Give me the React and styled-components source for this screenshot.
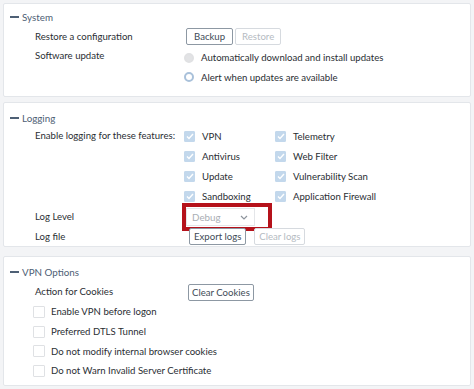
import styled, { createGlobalStyle } from "styled-components";

const GlobalStyle = createGlobalStyle`
  html, body {
    margin: 0;
    background: #f3f4f6;
    font-family: Lato, "Open Sans", sans-serif;
    font-size: 9.6px;
    color: #2a2e33;
  }
`;

const Page = styled.div`
  width: 468px;
  padding: 3px 0 0 3px;
  display: flex;
  flex-direction: column;
  gap: 5px;
`;

const Panel = styled.section`
  background: #ffffff;
  border: 1px solid #e3e6ea;
  border-radius: 2px;
  padding: ${(p) => p.$pad || "6px 0 6px 6px"};
  margin-top: ${(p) => p.$mt || 0}px;
  display: flex;
  flex-direction: column;
`;

const Header = styled.div`
  display: flex;
  align-items: center;
  gap: 3px;
  height: 16px;
  color: #4e6075;
  font-size: 9.8px;
  margin-bottom: 2px;
`;

const Dash = styled.span`
  width: 9px;
  height: 2px;
  background: #4e6075;
`;

const Row = styled.div`
  display: grid;
  grid-template-columns: 149px auto;
  align-items: ${(p) => p.$align || "center"};
  min-height: ${(p) => p.$h || 19}px;
  margin-left: 25px;
  margin-top: ${(p) => p.$mt || 0}px;
`;

const Label = styled.div`
  line-height: 14px;
  white-space: nowrap;
  padding-top: ${(p) => p.$top || 0}px;
`;

const Controls = styled.div`
  display: flex;
  align-items: center;
  gap: ${(p) => p.$gap || 2}px;
  padding-left: ${(p) => p.$left || 0}px;
`;

const Button = styled.button`
  font-family: inherit;
  font-size: 9.6px;
  height: 17px;
  padding: 0 ${(p) => p.$px || 6}px;
  background: #fff;
  border: 1px solid ${(p) => (p.disabled ? "#d6dadf" : "#8d98a3")};
  border-radius: 2px;
  color: ${(p) => (p.disabled ? "#b5bbc2" : "#3e4a56")};
  line-height: 15px;
`;

const RadioList = styled.div`
  display: flex;
  flex-direction: column;
  margin-top: 2px;
`;

const RadioItem = styled.div`
  display: flex;
  align-items: center;
  gap: 7px;
  height: 19.5px;
`;

const Radio = styled.span`
  width: 10px;
  height: 10px;
  border-radius: 50%;
  box-sizing: border-box;
  background: ${(p) => (p.$disabled ? "#e2e3e5" : "#fff")};
  border: 2px solid ${(p) => (p.$disabled ? "#e0e1e3" : "#a9c1da")};
`;

const CheckGrid = styled.div`
  display: grid;
  grid-template-columns: 91px auto;
  grid-auto-rows: 20px;
  align-items: center;
`;

const CheckItem = styled.div`
  display: flex;
  align-items: center;
  gap: 7px;
`;

const Box = styled.span`
  width: ${(p) => (p.$checked ? 11 : 12)}px;
  height: ${(p) => (p.$checked ? 11 : 12)}px;
  box-sizing: border-box;
  display: inline-flex;
  align-items: center;
  justify-content: center;
  background: ${(p) => (p.$checked ? "#c3d8ec" : "#fff")};
  border: 1px solid ${(p) => (p.$checked ? "#c3d8ec" : "#dfe1e4")};
  border-radius: 1px;
`;

const Highlight = styled.div`
  display: inline-flex;
  padding: 1px 13px 1px 0;
  outline: 4px solid #b5121b;
  margin-left: 2px;
`;

const Select = styled.div`
  width: 69px;
  height: 18px;
  box-sizing: border-box;
  border: 1px solid #e4e6e9;
  display: flex;
  align-items: center;
  justify-content: space-between;
  padding: 0 6px 0 5px;
  color: #a9aeb4;
  font-size: 9.8px;
`;

const CheckRow = styled.div`
  display: flex;
  align-items: center;
  gap: 6px;
  height: 19.7px;
  margin-left: 23px;
`;

function Check({ checked }) {
  return (
    <Box $checked={checked}>
      {checked && (
        <svg width="8" height="7" viewBox="0 0 8 7">
          <path d="M1 3.5 L3 5.5 L7 1" fill="none" stroke="#fff" strokeWidth="1.4" />
        </svg>
      )}
    </Box>
  );
}

const features = [
  ["VPN", "Telemetry"],
  ["Antivirus", "Web Filter"],
  ["Update", "Vulnerability Scan"],
  ["Sandboxing", "Application Firewall"],
];

const vpnOptions = [
  "Enable VPN before logon",
  "Preferred DTLS Tunnel",
  "Do not modify internal browser cookies",
  "Do not Warn Invalid Server Certificate",
];

export default function App() {
  return (
    <>
      <GlobalStyle />
      <Page>
        <Panel $pad="5px 0 9px 6px">
          <Header>
            <Dash /> System
          </Header>
          <Row>
            <Label>Restore a configuration</Label>
            <Controls $left={2}>
              <Button $px={7}>Backup</Button>
              <Button disabled>Restore</Button>
            </Controls>
          </Row>
          <Row $align="start">
            <Label $top={3}>Software update</Label>
            <RadioList>
              <RadioItem>
                <Radio $disabled />
                Automatically download and install updates
              </RadioItem>
              <RadioItem>
                <Radio />
                Alert when updates are available
              </RadioItem>
            </RadioList>
          </Row>
        </Panel>

        <Panel $pad="7px 0 1px 6px">
          <Header>
            <Dash /> Logging
          </Header>
          <Row $align="start" $mt={-2}>
            <Label $top={3}>Enable logging for these features:</Label>
            <CheckGrid>
              {features.map(([a, b]) => [
                <CheckItem key={a}>
                  <Check checked />
                  {a}
                </CheckItem>,
                <CheckItem key={b}>
                  <Check checked />
                  {b}
                </CheckItem>,
              ])}
            </CheckGrid>
          </Row>
          <Row $h={22}>
            <Label>Log Level</Label>
            <Controls>
              <Highlight>
                <Select>
                  Debug
                  <svg width="8" height="5" viewBox="0 0 8 5">
                    <path d="M1 1 L4 4 L7 1" fill="none" stroke="#8d949c" strokeWidth="1.2" />
                  </svg>
                </Select>
              </Highlight>
            </Controls>
          </Row>
          <Row $h={17}>
            <Label>Log file</Label>
            <Controls $gap={8} $left={5}>
              <Button $px={4}>Export logs</Button>
              <Button $px={4} disabled>Clear logs</Button>
            </Controls>
          </Row>
        </Panel>

        <Panel $pad="7px 0 4px 6px" $mt={4}>
          <Header>
            <Dash /> VPN Options
          </Header>
          <Row $h={20}>
            <Label>Action for Cookies</Label>
            <Controls $left={4}>
              <Button $px={3}>Clear Cookies</Button>
            </Controls>
          </Row>
          {vpnOptions.map((o) => (
            <CheckRow key={o}>
              <Check />
              {o}
            </CheckRow>
          ))}
        </Panel>
      </Page>
    </>
  );
}
